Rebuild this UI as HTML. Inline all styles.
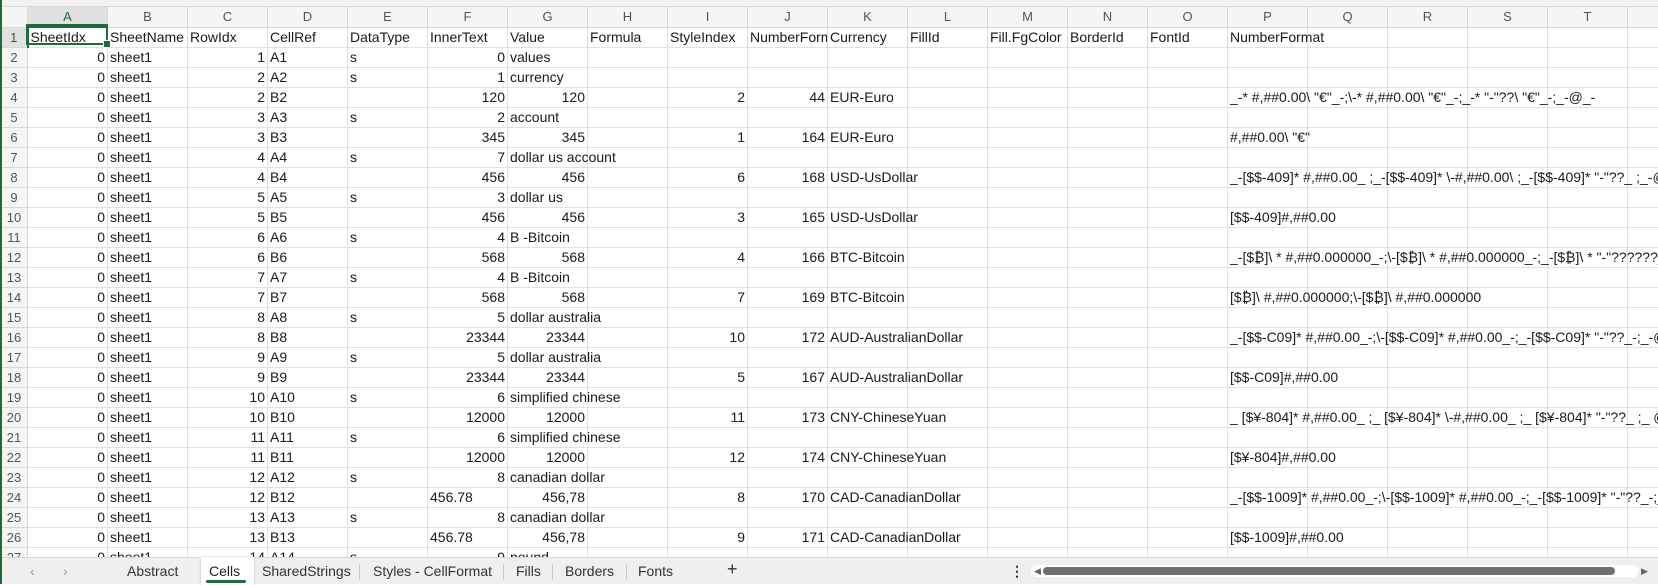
<!DOCTYPE html>
<html><head><meta charset="utf-8"><style>
html,body{margin:0;padding:0;width:1658px;height:584px;overflow:hidden;background:#fff;font-family:"Liberation Sans Narrow","Liberation Sans",sans-serif;}
#top{position:absolute;left:0;top:0;width:1658px;height:7px;background:#f3f2f1;}
#edge{position:absolute;left:0;top:0;width:2px;height:584px;background:#1e6b3e;z-index:5}
table{position:absolute;left:0;top:6px;border-collapse:collapse;table-layout:fixed;width:1658px;font-size:14px;color:#1a1a1a}
td{border:1px solid #e1e1e1;height:19px;padding:0 2px;white-space:nowrap;overflow:visible;line-height:19px;box-sizing:border-box}
tr.h td{background:#f5f5f5;color:#555;text-align:center;height:19px;border-color:#d8d8d8;font-size:13px}
td.rh{background:#f5f5f5;color:#555;text-align:center;border-color:#d8d8d8;font-size:13px;padding:0}
td.r{text-align:right}
td.c{overflow:hidden}
tr.h td.sel{background:#e1e1e1;color:#1e6b3e;border-bottom:2px solid #1e6b3e}
td.rsel{background:#e1e1e1;color:#1e6b3e;border-right:2px solid #1e6b3e}
#a1{position:absolute;left:26px;top:24px;width:82px;height:21px;border:2px solid #1e6b3e;box-sizing:border-box;z-index:3}
#a1 i{position:absolute;right:-5px;bottom:-5px;width:6px;height:6px;background:#1e6b3e;border:1px solid #fff}
#tabs{position:absolute;left:0;top:557px;width:1658px;height:27px;background:#f0efee;font-size:14px;color:#333;border-top:1px solid #d6d6d6;box-sizing:border-box}
#tabs span{position:absolute;top:5px}
.sep{position:absolute;top:6px;width:1px;height:16px;background:#c8c8c8}
#cells{position:absolute;left:201px;top:-1px;width:53px;height:28px;background:#fff;box-shadow:0 0 2px #bbb}
#track{position:absolute;left:1031px;top:7px;width:608px;height:12px;background:#fff;border-radius:6px}
#thumb{position:absolute;left:1043px;top:9px;width:572px;height:8px;background:#6f6f6f;border-radius:4px}
</style></head><body>
<div id="top"></div><div id="edge"></div>
<table>
<colgroup><col style="width:27px"><col span="20" style="width:80px"><col style="width:31px"></colgroup>
<tr class="h"><td></td><td class="sel">A</td><td>B</td><td>C</td><td>D</td><td>E</td><td>F</td><td>G</td><td>H</td><td>I</td><td>J</td><td>K</td><td>L</td><td>M</td><td>N</td><td>O</td><td>P</td><td>Q</td><td>R</td><td>S</td><td>T</td><td></td></tr>
<tr><td class="rh rsel">1</td><td>SheetIdx</td><td>SheetName</td><td>RowIdx</td><td>CellRef</td><td>DataType</td><td>InnerText</td><td>Value</td><td>Formula</td><td>StyleIndex</td><td class="c">NumberFormatId</td><td>Currency</td><td>FillId</td><td>Fill.FgColor</td><td>BorderId</td><td>FontId</td><td>NumberFormat</td><td></td><td></td><td></td><td></td><td></td></tr>
<tr><td class="rh">2</td><td class="r">0</td><td>sheet1</td><td class="r">1</td><td>A1</td><td>s</td><td class="r">0</td><td>values</td><td></td><td></td><td></td><td></td><td></td><td></td><td></td><td></td><td></td><td></td><td></td><td></td><td></td><td></td></tr>
<tr><td class="rh">3</td><td class="r">0</td><td>sheet1</td><td class="r">2</td><td>A2</td><td>s</td><td class="r">1</td><td>currency</td><td></td><td></td><td></td><td></td><td></td><td></td><td></td><td></td><td></td><td></td><td></td><td></td><td></td><td></td></tr>
<tr><td class="rh">4</td><td class="r">0</td><td>sheet1</td><td class="r">2</td><td>B2</td><td></td><td class="r">120</td><td class="r">120</td><td></td><td class="r">2</td><td class="r">44</td><td>EUR-Euro</td><td></td><td></td><td></td><td></td><td>_-* #,##0.00\ "€"_-;\-* #,##0.00\ "€"_-;_-* "-"??\ "€"_-;_-@_-</td><td></td><td></td><td></td><td></td><td></td></tr>
<tr><td class="rh">5</td><td class="r">0</td><td>sheet1</td><td class="r">3</td><td>A3</td><td>s</td><td class="r">2</td><td>account</td><td></td><td></td><td></td><td></td><td></td><td></td><td></td><td></td><td></td><td></td><td></td><td></td><td></td><td></td></tr>
<tr><td class="rh">6</td><td class="r">0</td><td>sheet1</td><td class="r">3</td><td>B3</td><td></td><td class="r">345</td><td class="r">345</td><td></td><td class="r">1</td><td class="r">164</td><td>EUR-Euro</td><td></td><td></td><td></td><td></td><td>#,##0.00\ "€"</td><td></td><td></td><td></td><td></td><td></td></tr>
<tr><td class="rh">7</td><td class="r">0</td><td>sheet1</td><td class="r">4</td><td>A4</td><td>s</td><td class="r">7</td><td>dollar us account</td><td></td><td></td><td></td><td></td><td></td><td></td><td></td><td></td><td></td><td></td><td></td><td></td><td></td><td></td></tr>
<tr><td class="rh">8</td><td class="r">0</td><td>sheet1</td><td class="r">4</td><td>B4</td><td></td><td class="r">456</td><td class="r">456</td><td></td><td class="r">6</td><td class="r">168</td><td>USD-UsDollar</td><td></td><td></td><td></td><td></td><td>_-[$$-409]* #,##0.00_ ;_-[$$-409]* \-#,##0.00\ ;_-[$$-409]* "-"??_ ;_-@_</td><td></td><td></td><td></td><td></td><td></td></tr>
<tr><td class="rh">9</td><td class="r">0</td><td>sheet1</td><td class="r">5</td><td>A5</td><td>s</td><td class="r">3</td><td>dollar us</td><td></td><td></td><td></td><td></td><td></td><td></td><td></td><td></td><td></td><td></td><td></td><td></td><td></td><td></td></tr>
<tr><td class="rh">10</td><td class="r">0</td><td>sheet1</td><td class="r">5</td><td>B5</td><td></td><td class="r">456</td><td class="r">456</td><td></td><td class="r">3</td><td class="r">165</td><td>USD-UsDollar</td><td></td><td></td><td></td><td></td><td>[$$-409]#,##0.00</td><td></td><td></td><td></td><td></td><td></td></tr>
<tr><td class="rh">11</td><td class="r">0</td><td>sheet1</td><td class="r">6</td><td>A6</td><td>s</td><td class="r">4</td><td>B -Bitcoin</td><td></td><td></td><td></td><td></td><td></td><td></td><td></td><td></td><td></td><td></td><td></td><td></td><td></td><td></td></tr>
<tr><td class="rh">12</td><td class="r">0</td><td>sheet1</td><td class="r">6</td><td>B6</td><td></td><td class="r">568</td><td class="r">568</td><td></td><td class="r">4</td><td class="r">166</td><td>BTC-Bitcoin</td><td></td><td></td><td></td><td></td><td>_-[$₿]\ * #,##0.000000_-;\-[$₿]\ * #,##0.000000_-;_-[$₿]\ * "-"??????_-;_-@_-</td><td></td><td></td><td></td><td></td><td></td></tr>
<tr><td class="rh">13</td><td class="r">0</td><td>sheet1</td><td class="r">7</td><td>A7</td><td>s</td><td class="r">4</td><td>B -Bitcoin</td><td></td><td></td><td></td><td></td><td></td><td></td><td></td><td></td><td></td><td></td><td></td><td></td><td></td><td></td></tr>
<tr><td class="rh">14</td><td class="r">0</td><td>sheet1</td><td class="r">7</td><td>B7</td><td></td><td class="r">568</td><td class="r">568</td><td></td><td class="r">7</td><td class="r">169</td><td>BTC-Bitcoin</td><td></td><td></td><td></td><td></td><td>[$₿]\ #,##0.000000;\-[$₿]\ #,##0.000000</td><td></td><td></td><td></td><td></td><td></td></tr>
<tr><td class="rh">15</td><td class="r">0</td><td>sheet1</td><td class="r">8</td><td>A8</td><td>s</td><td class="r">5</td><td>dollar australia</td><td></td><td></td><td></td><td></td><td></td><td></td><td></td><td></td><td></td><td></td><td></td><td></td><td></td><td></td></tr>
<tr><td class="rh">16</td><td class="r">0</td><td>sheet1</td><td class="r">8</td><td>B8</td><td></td><td class="r">23344</td><td class="r">23344</td><td></td><td class="r">10</td><td class="r">172</td><td>AUD-AustralianDollar</td><td></td><td></td><td></td><td></td><td>_-[$$-C09]* #,##0.00_-;\-[$$-C09]* #,##0.00_-;_-[$$-C09]* "-"??_-;_-@_-</td><td></td><td></td><td></td><td></td><td></td></tr>
<tr><td class="rh">17</td><td class="r">0</td><td>sheet1</td><td class="r">9</td><td>A9</td><td>s</td><td class="r">5</td><td>dollar australia</td><td></td><td></td><td></td><td></td><td></td><td></td><td></td><td></td><td></td><td></td><td></td><td></td><td></td><td></td></tr>
<tr><td class="rh">18</td><td class="r">0</td><td>sheet1</td><td class="r">9</td><td>B9</td><td></td><td class="r">23344</td><td class="r">23344</td><td></td><td class="r">5</td><td class="r">167</td><td>AUD-AustralianDollar</td><td></td><td></td><td></td><td></td><td>[$$-C09]#,##0.00</td><td></td><td></td><td></td><td></td><td></td></tr>
<tr><td class="rh">19</td><td class="r">0</td><td>sheet1</td><td class="r">10</td><td>A10</td><td>s</td><td class="r">6</td><td>simplified chinese</td><td></td><td></td><td></td><td></td><td></td><td></td><td></td><td></td><td></td><td></td><td></td><td></td><td></td><td></td></tr>
<tr><td class="rh">20</td><td class="r">0</td><td>sheet1</td><td class="r">10</td><td>B10</td><td></td><td class="r">12000</td><td class="r">12000</td><td></td><td class="r">11</td><td class="r">173</td><td>CNY-ChineseYuan</td><td></td><td></td><td></td><td></td><td>_ [$¥-804]* #,##0.00_ ;_ [$¥-804]* \-#,##0.00_ ;_ [$¥-804]* "-"??_ ;_ @_</td><td></td><td></td><td></td><td></td><td></td></tr>
<tr><td class="rh">21</td><td class="r">0</td><td>sheet1</td><td class="r">11</td><td>A11</td><td>s</td><td class="r">6</td><td>simplified chinese</td><td></td><td></td><td></td><td></td><td></td><td></td><td></td><td></td><td></td><td></td><td></td><td></td><td></td><td></td></tr>
<tr><td class="rh">22</td><td class="r">0</td><td>sheet1</td><td class="r">11</td><td>B11</td><td></td><td class="r">12000</td><td class="r">12000</td><td></td><td class="r">12</td><td class="r">174</td><td>CNY-ChineseYuan</td><td></td><td></td><td></td><td></td><td>[$¥-804]#,##0.00</td><td></td><td></td><td></td><td></td><td></td></tr>
<tr><td class="rh">23</td><td class="r">0</td><td>sheet1</td><td class="r">12</td><td>A12</td><td>s</td><td class="r">8</td><td>canadian dollar</td><td></td><td></td><td></td><td></td><td></td><td></td><td></td><td></td><td></td><td></td><td></td><td></td><td></td><td></td></tr>
<tr><td class="rh">24</td><td class="r">0</td><td>sheet1</td><td class="r">12</td><td>B12</td><td></td><td>456.78</td><td class="r">456,78</td><td></td><td class="r">8</td><td class="r">170</td><td>CAD-CanadianDollar</td><td></td><td></td><td></td><td></td><td>_-[$$-1009]* #,##0.00_-;\-[$$-1009]* #,##0.00_-;_-[$$-1009]* "-"??_-;_-@_-</td><td></td><td></td><td></td><td></td><td></td></tr>
<tr><td class="rh">25</td><td class="r">0</td><td>sheet1</td><td class="r">13</td><td>A13</td><td>s</td><td class="r">8</td><td>canadian dollar</td><td></td><td></td><td></td><td></td><td></td><td></td><td></td><td></td><td></td><td></td><td></td><td></td><td></td><td></td></tr>
<tr><td class="rh">26</td><td class="r">0</td><td>sheet1</td><td class="r">13</td><td>B13</td><td></td><td>456.78</td><td class="r">456,78</td><td></td><td class="r">9</td><td class="r">171</td><td>CAD-CanadianDollar</td><td></td><td></td><td></td><td></td><td>[$$-1009]#,##0.00</td><td></td><td></td><td></td><td></td><td></td></tr>
<tr><td class="rh">27</td><td class="r">0</td><td>sheet1</td><td class="r">14</td><td>A14</td><td>s</td><td class="r">9</td><td>pound</td><td></td><td></td><td></td><td></td><td></td><td></td><td></td><td></td><td></td><td></td><td></td><td></td><td></td><td></td></tr>
</table>
<div id="a1"><i></i></div>
<div id="tabs">
<span style="left:30px;color:#999">&#8249;</span><span style="left:63px;color:#999">&#8250;</span>
<span style="left:127px">Abstract</span>
<div id="cells"></div>
<span style="left:209px;color:#222">Cells</span>
<div style="position:absolute;left:206px;top:22px;width:40px;height:3px;background:#1e6b3e;border-radius:2px"></div>
<span style="left:262px">SharedStrings</span><div class="sep" style="left:359px"></div>
<span style="left:373px">Styles - CellFormat</span><div class="sep" style="left:503px"></div>
<span style="left:516px">Fills</span><div class="sep" style="left:552px"></div>
<span style="left:565px">Borders</span><div class="sep" style="left:626px"></div>
<span style="left:638px">Fonts</span>
<span style="left:727px;font-size:18px;top:1px">+</span>
<span style="left:1010px;font-weight:bold">&#8942;</span>
<div id="track"></div><div id="thumb"></div>
<span style="left:1034px;font-size:9px;top:8px;color:#666">&#9664;</span>
<span style="left:1641px;font-size:9px;top:8px;color:#666">&#9654;</span>
</div>
</body></html>
